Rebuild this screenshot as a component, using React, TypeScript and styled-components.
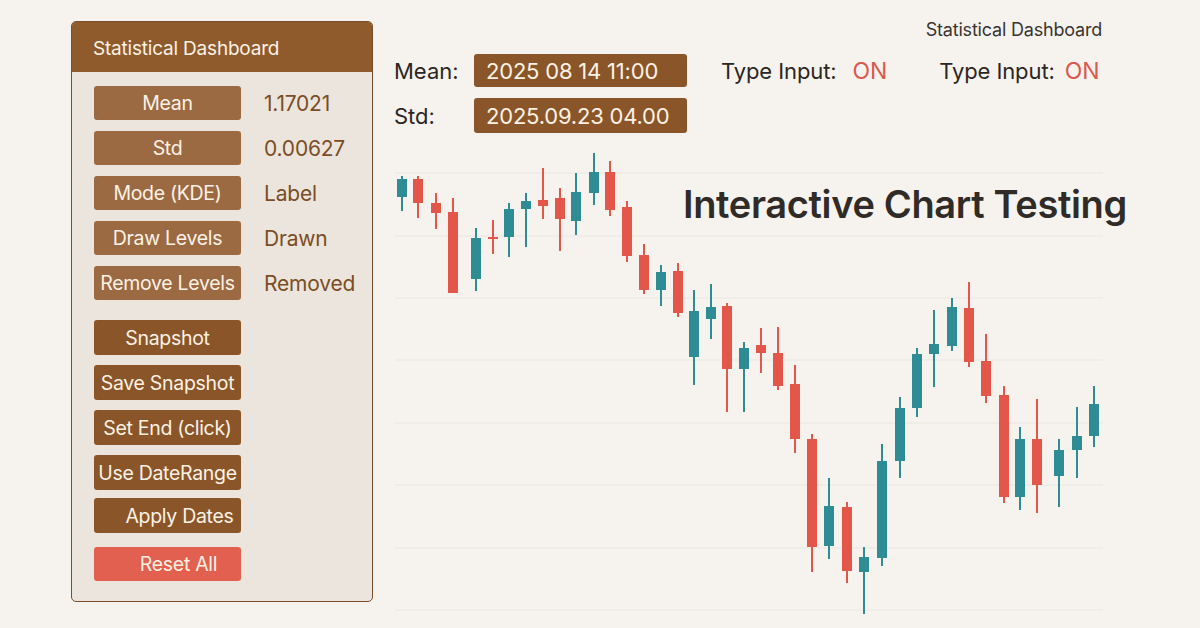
import React from 'react';
import styled, { createGlobalStyle } from 'styled-components';

const GlobalStyle = createGlobalStyle`
	html, body {
		margin: 0;
		padding: 0;
		background: #f6f3ef;
	}
	body {
		font-family: Inter, 'Noto Sans', 'Liberation Sans', sans-serif;
		color: #2b2622;
	}
`;

const UP = '#2e8c94';
const DOWN = '#e2574a';

// x, up, wickTop, bodyTop, bodyBottom, wickBottom
type Candle = [number, boolean, number, number, number, number];

const candles: Candle[] = [
	[402, true, 176, 179, 197, 211],
	[418, false, 176, 179, 203, 218],
	[436, false, 193, 203, 213, 229],
	[453, false, 198, 212, 293, 293],
	[476, true, 228, 238, 279, 291],
	[493, false, 220, 237, 239, 254],
	[509, true, 203, 209, 237, 257],
	[526, true, 193, 201, 209, 247],
	[543, false, 168, 200, 206, 219],
	[560, false, 188, 198, 219, 251],
	[576, true, 173, 192, 221, 235],
	[594, true, 153, 172, 193, 205],
	[610, false, 161, 172, 210, 216],
	[627, false, 201, 207, 256, 262],
	[644, false, 244, 255, 290, 294],
	[661, true, 265, 272, 290, 306],
	[678, false, 263, 271, 313, 317],
	[694, true, 290, 311, 357, 385],
	[711, true, 284, 307, 319, 339],
	[727, false, 303, 306, 369, 412],
	[744, true, 342, 348, 369, 412],
	[761, false, 328, 345, 353, 373],
	[778, false, 327, 353, 386, 390],
	[795, false, 365, 384, 439, 453],
	[812, false, 434, 439, 547, 572],
	[829, true, 478, 506, 546, 559],
	[847, false, 502, 507, 571, 583],
	[864, true, 547, 557, 572, 614],
	[882, true, 444, 461, 558, 566],
	[900, true, 397, 408, 461, 478],
	[917, true, 348, 354, 408, 417],
	[934, true, 310, 344, 354, 387],
	[952, true, 298, 307, 346, 351],
	[969, false, 282, 308, 362, 367],
	[986, false, 334, 361, 396, 403],
	[1004, false, 386, 395, 497, 503],
	[1020, true, 427, 439, 497, 510],
	[1037, false, 399, 439, 485, 513],
	[1059, true, 439, 450, 476, 507],
	[1077, true, 407, 436, 450, 478],
	[1094, true, 386, 404, 436, 447],
];

const gridLines = [173, 236, 298, 360, 423, 485, 548, 610];

const Page = styled.div`
	display: flex;
	height: 628px;
	overflow: hidden;
	padding: 21px 0 0 71px;
	box-sizing: border-box;
`;

const Panel = styled.div`
	width: 302px;
	height: 581px;
	box-sizing: border-box;
	border: 1px solid #7a4e2a;
	border-radius: 5px;
	background: #ebe5dd;
	overflow: hidden;
	display: flex;
	flex-direction: column;
`;

const PanelHeader = styled.div`
	height: 50px;
	background: #8f5b2c;
	color: #fbf1e4;
	font-size: 19px;
	letter-spacing: -0.2px;
	display: flex;
	align-items: center;
	padding: 2px 0 0 21px;
	box-sizing: border-box;
`;

const PanelBody = styled.div`
	padding: 14px 0 0 22px;
	display: flex;
	flex-direction: column;
`;

const StatRow = styled.div`
	display: flex;
	align-items: center;
	gap: 23px;
	margin-bottom: 11px;
`;

const ActionButton = styled.div<{ $tone: 'muted' | 'dark' | 'danger'; $shift?: number; $gap?: number }>`
	width: 147px;
	height: ${(p) => (p.$tone === 'dark' ? 35 : 34)}px;
	border-radius: 3px;
	box-sizing: border-box;
	display: flex;
	align-items: center;
	justify-content: center;
	padding-left: ${(p) => p.$shift ?? 0}px;
	margin-top: ${(p) => p.$gap ?? 0}px;
	font-size: 19.5px;
	letter-spacing: -0.3px;
	color: #fbf1e4;
	white-space: nowrap;
	background: ${(p) =>
		p.$tone === 'muted' ? '#9b6a43' : p.$tone === 'danger' ? '#e2604f' : '#8a5629'};
`;

const StatValue = styled.span`
	font-size: 21px;
	letter-spacing: -0.2px;
	color: #7b4d24;
`;

const Main = styled.div`
	flex: 1;
	margin-left: 17px;
	display: flex;
	flex-direction: column;
`;

const TopLabel = styled.div`
	font-size: 18px;
	line-height: 18px;
	height: 18px;
	text-align: right;
	padding-right: 98px;
	color: #3a3530;
	letter-spacing: -0.2px;
`;

const FieldRow = styled.div<{ $top: number; $height: number }>`
	display: flex;
	align-items: center;
	height: ${(p) => p.$height}px;
	margin-top: ${(p) => p.$top}px;
	padding-left: 4px;
`;

const FieldLabel = styled.span`
	width: 80px;
	font-size: 22px;
	color: #2b2622;
`;

const DateBox = styled.div`
	width: 213px;
	height: 100%;
	border-radius: 3px;
	background: #8a5629;
	color: #fbf1e4;
	font-size: 22px;
	display: flex;
	align-items: center;
	padding-left: 12px;
	box-sizing: border-box;
	letter-spacing: -0.2px;
`;

const Toggle = styled.span<{ $left: number }>`
	margin-left: ${(p) => p.$left}px;
	font-size: 22px;
	color: #2b2622;
	white-space: nowrap;
	letter-spacing: -0.1px;
`;

const ToggleState = styled.span<{ $gap: number }>`
	color: #d9594c;
	font-size: 23px;
	margin-left: ${(p) => p.$gap}px;
`;

const ChartArea = styled.div`
	position: relative;
	margin-top: 7px;
	width: 720px;
	height: 488px;
`;

const ChartTitle = styled.div`
	position: absolute;
	left: 293px;
	top: 41px;
	font-size: 38px;
	font-weight: 600;
	color: #302b27;
	letter-spacing: -0.35px;
	white-space: nowrap;
`;

const stats: [string, string][] = [
	['Mean', '1.17021'],
	['Std', '0.00627'],
	['Mode (KDE)', 'Label'],
	['Draw Levels', 'Drawn'],
	['Remove Levels', 'Removed'],
];

const CandleChart: React.FC = () => (
	<svg width="720" height="488" viewBox="390 140 720 488">
		{gridLines.map((y) => (
			<line key={y} x1={395} x2={1103} y1={y} y2={y} stroke="#eeeae5" strokeWidth={1.5} />
		))}
		{candles.map(([x, up, wt, bt, bb, wb]) => {
			const color = up ? UP : DOWN;
			return (
				<g key={x}>
					<rect x={x - 1} y={wt} width={2} height={wb - wt} fill={color} />
					<rect x={x - 5} y={bt} width={10} height={Math.max(bb - bt, 2)} fill={color} />
				</g>
			);
		})}
	</svg>
);

const App: React.FC = () => (
	<>
		<GlobalStyle />
		<Page>
			<Panel>
				<PanelHeader>Statistical Dashboard</PanelHeader>
				<PanelBody>
					{stats.map(([label, value]) => (
						<StatRow key={label}>
							<ActionButton $tone="muted">{label}</ActionButton>
							<StatValue>{value}</StatValue>
						</StatRow>
					))}
					<ActionButton $tone="dark" $gap={9}>Snapshot</ActionButton>
					<ActionButton $tone="dark" $gap={10}>Save Snapshot</ActionButton>
					<ActionButton $tone="dark" $gap={10}>Set End (click)</ActionButton>
					<ActionButton $tone="dark" $gap={10}>Use DateRange</ActionButton>
					<ActionButton $tone="dark" $gap={8} $shift={24}>Apply Dates</ActionButton>
					<ActionButton $tone="danger" $gap={14} $shift={22}>Reset All</ActionButton>
				</PanelBody>
			</Panel>
			<Main>
				<TopLabel>Statistical Dashboard</TopLabel>
				<FieldRow $top={15} $height={33}>
					<FieldLabel>Mean:</FieldLabel>
					<DateBox>2025 08 14 11:00</DateBox>
					<Toggle $left={34}>
						Type Input:<ToggleState $gap={16}>ON</ToggleState>
					</Toggle>
					<Toggle $left={52}>
						Type Input:<ToggleState $gap={10}>ON</ToggleState>
					</Toggle>
				</FieldRow>
				<FieldRow $top={11} $height={35}>
					<FieldLabel>Std:</FieldLabel>
					<DateBox>2025.09.23 04.00</DateBox>
				</FieldRow>
				<ChartArea>
					<CandleChart />
					<ChartTitle>Interactive Chart Testing</ChartTitle>
				</ChartArea>
			</Main>
		</Page>
	</>
);

export default App;
